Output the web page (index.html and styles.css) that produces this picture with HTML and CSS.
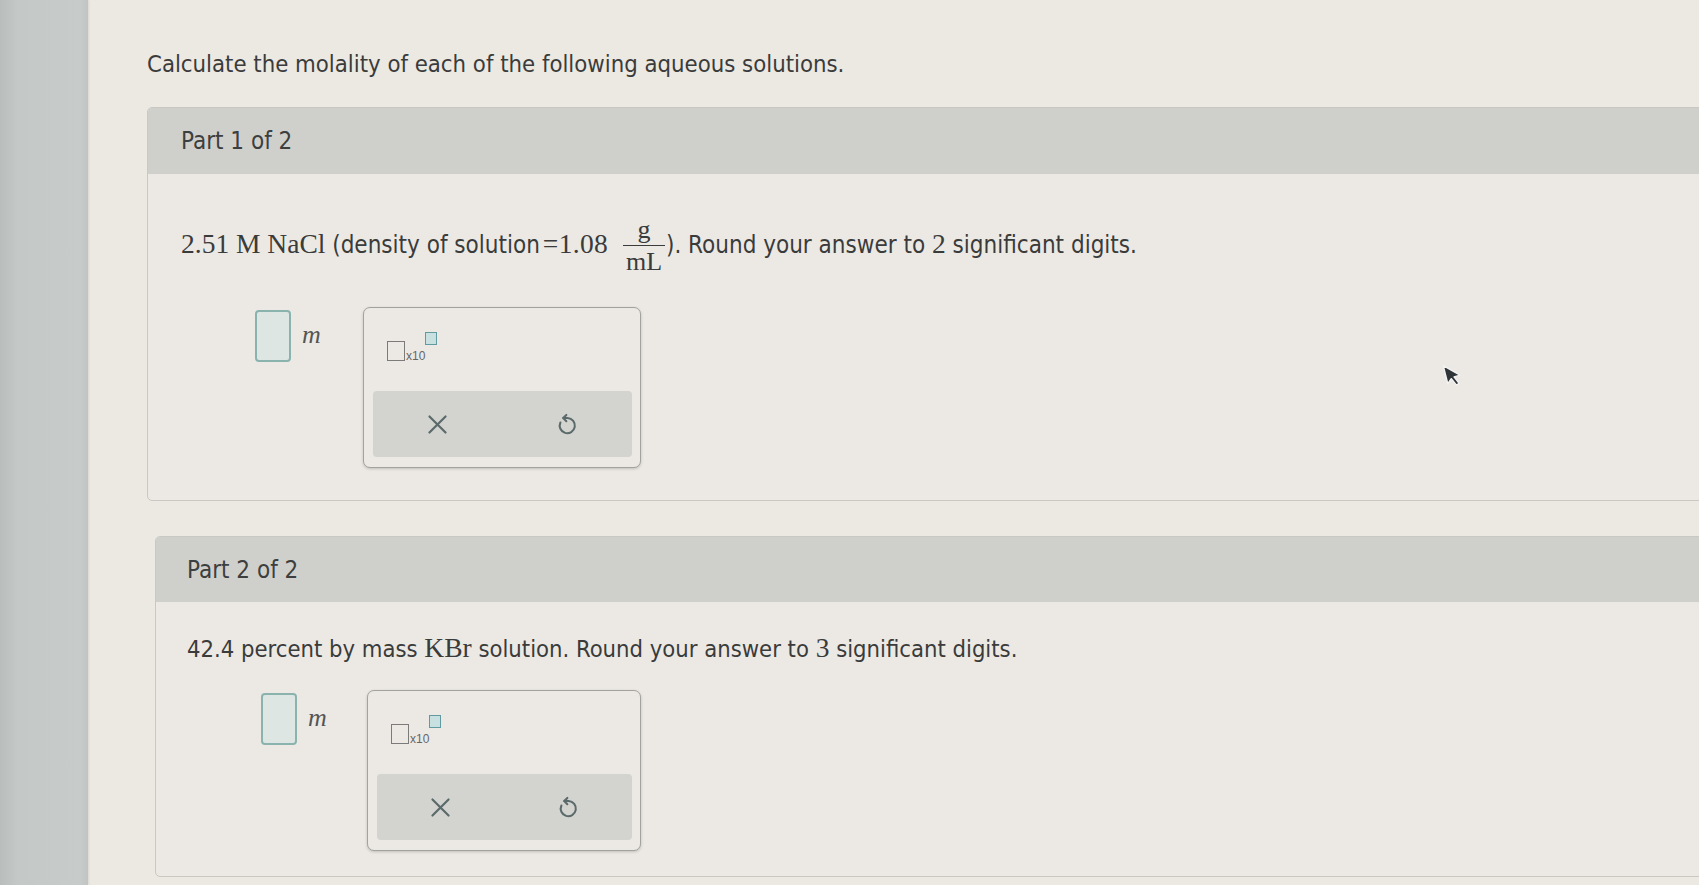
FILE: index.html
```html
<!DOCTYPE html>
<html lang="en">
<head>
<meta charset="utf-8">
<title>Molality</title>
<link rel="stylesheet" href="styles.css">
</head>
<body>
<div class="screen">
  <div class="strip"></div>
  <main class="page">
    <h1 class="title">Calculate the molality of each of the following aqueous solutions.</h1>

    <section class="part part-one">
      <div class="part-head">Part 1 of 2</div>
      <div class="part-body body-one">
        <p class="question q-one"><span class="math">2.51 M NaCl</span> (density of solution<span class="math eq">=1.08</span><span class="frac"><span class="num">g</span><span class="den">mL</span></span>). Round your answer to <span class="math">2</span> significant digits.</p>
        <div class="answer-row">
          <div class="answer"><span class="ans-box"></span><span class="unit">m</span></div>
          <div class="palette">
            <div class="sci-row">
              <span class="sci"><span class="sq"></span><span class="x10">x10</span><span class="sup"></span></span>
            </div>
            <div class="btnbar">
              <span class="btn"><svg width="23" height="23" viewBox="0 0 20 20"><path d="M3 3 L17 17 M17 3 L3 17" stroke="#5b6a6a" stroke-width="1.9" fill="none" stroke-linecap="round"/></svg></span>
              <span class="btn"><svg width="26" height="26" viewBox="0 0 24 24"><path d="M8.6 6.5 H12.6 A7 7 0 1 1 5.9 10.6" stroke="#5b6a6a" stroke-width="1.9" fill="none" stroke-linecap="round"/><path d="M11.4 3.6 L8.5 6.5 L11.4 9.4" stroke="#5b6a6a" stroke-width="1.9" fill="none" stroke-linecap="round" stroke-linejoin="round"/></svg></span>
            </div>
          </div>
        </div>
      </div>
    </section>

    <section class="part part-two">
      <div class="part-head">Part 2 of 2</div>
      <div class="part-body body-two">
        <p class="question q-two">42.4 percent by mass <span class="math">KBr</span> solution. Round your answer to <span class="math">3</span> significant digits.</p>
        <div class="answer-row">
          <div class="answer"><span class="ans-box"></span><span class="unit">m</span></div>
          <div class="palette">
            <div class="sci-row">
              <span class="sci"><span class="sq"></span><span class="x10">x10</span><span class="sup"></span></span>
            </div>
            <div class="btnbar">
              <span class="btn"><svg width="23" height="23" viewBox="0 0 20 20"><path d="M3 3 L17 17 M17 3 L3 17" stroke="#5b6a6a" stroke-width="1.9" fill="none" stroke-linecap="round"/></svg></span>
              <span class="btn"><svg width="26" height="26" viewBox="0 0 24 24"><path d="M8.6 6.5 H12.6 A7 7 0 1 1 5.9 10.6" stroke="#5b6a6a" stroke-width="1.9" fill="none" stroke-linecap="round"/><path d="M11.4 3.6 L8.5 6.5 L11.4 9.4" stroke="#5b6a6a" stroke-width="1.9" fill="none" stroke-linecap="round" stroke-linejoin="round"/></svg></span>
            </div>
          </div>
        </div>
      </div>
    </section>
  </main>
</div>
<svg class="cursor" width="22" height="28" viewBox="0 0 18 24"><path d="M2 2 L2 18 L6 14.5 L9 21 L11.5 20 L8.6 13.6 L14 13.4 Z" fill="#2f3438" stroke="#f2f2f2" stroke-width="1.2" stroke-linejoin="round"/></svg>
</body>
</html>
```

FILE: styles.css
```css
html, body {
  margin: 0;
  padding: 0;
  height: 100%;
  overflow: hidden;
}
body {
  background: #ece8e2;
  color: #3b3c3c;
  font-family: "DejaVu Sans Condensed", "DejaVu Sans", sans-serif;
  font-stretch: condensed;
  position: relative;
}
.screen {
  display: flex;
  min-height: 100%;
}
.strip {
  flex: 0 0 88px;
  background: linear-gradient(to right, #b9bebd 0px, #c4c9c7 18px, #c7cbc9 80px, #c0c4c2 88px);
  box-shadow: 1px 0 2px rgba(0,0,0,0.08);
}
.page {
  flex: 1;
  padding: 49px 0 0 59px;
  margin-right: -30px;
}
.title {
  margin: 0;
  font-size: 23.7px;
  font-weight: normal;
  line-height: 30px;
  color: #3a3b3b;
}
.part {
  border: 1px solid #c9c8c3;
  border-radius: 5px;
  background: #ece9e4;
}
.part-one {
  margin-top: 28px;
}
.part-two {
  margin-top: 35px;
  margin-left: 8px;
}
.part-head {
  height: 66px;
  display: flex;
  align-items: center;
  padding-left: 33px;
  background: #cfd0cc;
  border-radius: 4px 4px 0 0;
  font-size: 24px;
  color: #3d3e3e;
}
.part-two .part-head {
  height: 65px;
  padding-left: 31px;
}
.part-body {
  padding-left: 33px;
}
.body-one {
  padding-bottom: 32px;
}
.body-two {
  padding-left: 31px;
  padding-bottom: 25px;
}
.question {
  margin: 0;
  font-size: 24px;
  line-height: 30px;
  color: #3a3b3b;
}
.q-one {
  margin-top: 40px;
}
.q-two {
  margin-top: 31px;
  font-size: 23.6px;
}
.math {
  font-family: "Liberation Serif", "DejaVu Serif", serif;
  font-stretch: normal;
  font-size: 27.5px;
}
.eq {
  margin-left: 3px;
  letter-spacing: 0.3px;
}
.frac {
  display: inline-flex;
  flex-direction: column;
  align-items: center;
  vertical-align: middle;
  margin: 0 1px 0 15px;
  font-family: "Liberation Serif", "DejaVu Serif", serif;
  font-stretch: normal;
  font-size: 26px;
  line-height: 31px;
}
.num {
  border-bottom: 1.5px solid #3a3b3b;
  padding: 0 2px;
  min-width: 38px;
  text-align: center;
}
.den {
  padding: 0 2px;
}
.answer-row {
  display: flex;
  align-items: flex-start;
}
.body-one .answer-row {
  margin-top: 30px;
}
.body-two .answer-row {
  margin-top: 26px;
}
.answer {
  display: flex;
  align-items: flex-start;
  margin-left: 74px;
  margin-top: 3px;
  width: 108px;
}
.body-two .answer {
  width: 106px;
}
.ans-box {
  width: 32px;
  height: 48px;
  border: 2px solid #8ab3ae;
  border-radius: 4px;
  background: #dde6e2;
}
.unit {
  margin-left: 11px;
  margin-top: 12px;
  font-family: "Liberation Serif", "DejaVu Serif", serif;
  font-stretch: normal;
  font-style: italic;
  font-size: 26px;
  line-height: 26px;
  color: #555;
}
.palette {
  width: 259px;
  padding: 0 8px 10px 9px;
  border: 1.5px solid #a2a29e;
  border-radius: 7px;
  box-shadow: 0 1px 3px rgba(0,0,0,0.18);
  background: #ece9e4;
}
.body-two .palette {
  width: 255px;
}
.sci-row {
  height: 59px;
  padding: 24px 0 0 14px;
}
.sci {
  display: inline-flex;
  align-items: flex-end;
  height: 29px;
}
.sq {
  width: 16px;
  height: 18px;
  border: 1.5px solid #7a7b7a;
}
.x10 {
  font-family: "Liberation Sans", Arial, sans-serif;
  font-stretch: normal;
  font-size: 12px;
  line-height: 1;
  color: #666;
  margin-left: 1px;
  margin-bottom: -1px;
}
.sup {
  align-self: flex-start;
  width: 10px;
  height: 11px;
  border: 1.5px solid #5f9ba0;
  background: #c9e0e0;
  margin-left: 0;
}
.btnbar {
  display: grid;
  grid-template-columns: 1fr 1fr;
  height: 66px;
  background: #d3d3d0;
  border-radius: 4px;
}
.btn {
  display: flex;
  align-items: center;
  justify-content: center;
}
.cursor {
  position: absolute;
  left: 1443px;
  top: 361px;
  transform: rotate(-14deg);
}
```
